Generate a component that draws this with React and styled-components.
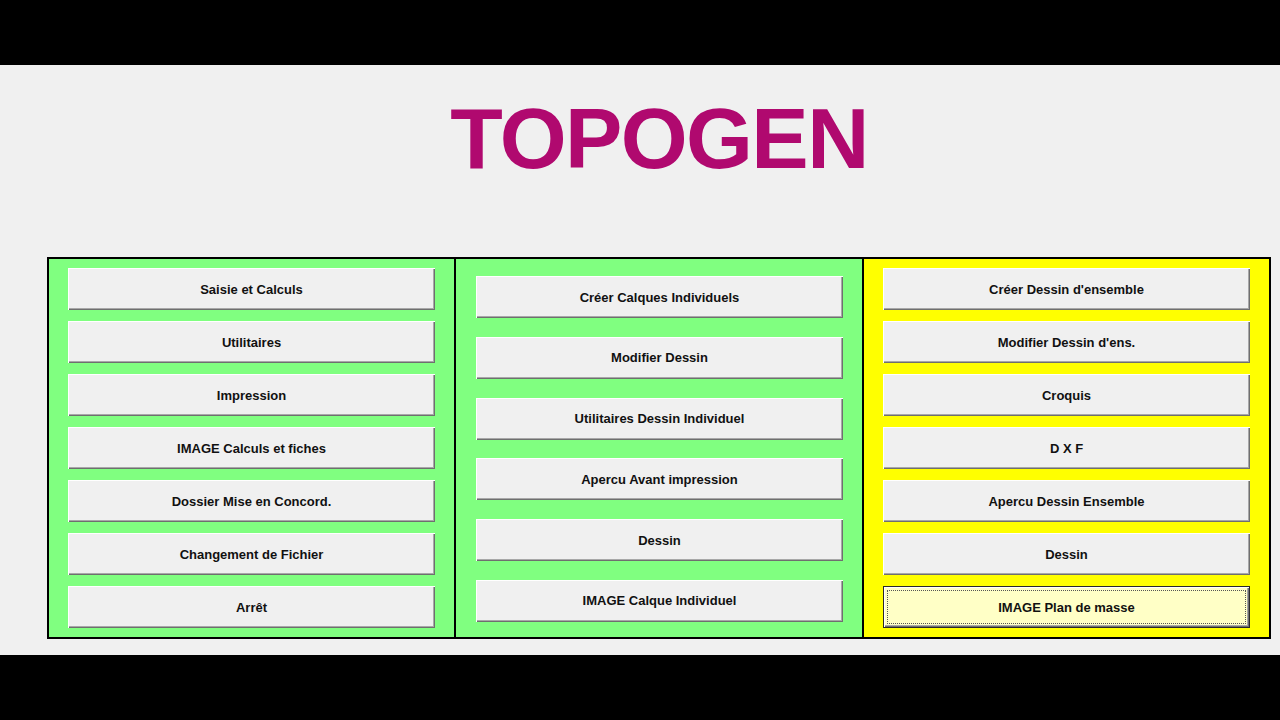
import React from "react";
import styled, { createGlobalStyle } from "styled-components";

const Global = createGlobalStyle`
  html, body { margin: 0; padding: 0; background: #000; }
  body { font-family: "Liberation Sans", Arial, sans-serif; }
  #root { width: 1280px; height: 720px; }
`;

const Screen = styled.div`
  width: 1280px;
  height: 720px;
  display: flex;
  flex-direction: column;
  background: #000;
`;

const Band = styled.div`
  height: 65px;
  flex: none;
  background: #000;
`;

const Window = styled.main`
  height: 590px;
  flex: none;
  background: #f0f0f0;
  padding: 30px 9px 0 47px;
  box-sizing: border-box;
  display: flex;
  flex-direction: column;
`;

const Title = styled.h1`
  margin: 0 0 76px;
  font-family: "Liberation Sans", Arial, sans-serif;
  font-weight: 700;
  font-size: 86px;
  line-height: 86px;
  letter-spacing: -1.6px;
  color: #b0096f;
  text-align: center;
`;

const Board = styled.div`
  display: grid;
  grid-template-columns: 405px 406px 405px;
  gap: 2px;
  border: 2px solid #000;
  background: #000;
  width: 1224px;
  height: 382px;
  box-sizing: border-box;
`;

const Column = styled.div`
  background: ${(p) => p.$bg};
  display: flex;
  flex-direction: column;
  padding: ${(p) => (p.$spread ? "17px 19px 0 20px" : "9px 19px 0 19px")};
  gap: ${(p) => (p.$spread ? "18.8px" : "11px")};
`;

const Button = styled.button`
  height: 42px;
  flex: none;
  width: 100%;
  box-sizing: border-box;
  font-family: "Liberation Sans", Arial, sans-serif;
  font-weight: 700;
  font-size: 13px;
  color: #111;
  background: ${(p) => (p.$focused ? "#ffffc6" : "#f0f0f0")};
  border: ${(p) => (p.$focused ? "1px solid #2a2a2a" : "none")};
  box-shadow: inset 1px 1px #ffffff, inset -1px -1px #6f6f6f,
    inset -2px -2px #a8a8a8;
  padding: 0;
  margin: 0;
  cursor: default;
  outline: ${(p) => (p.$focused ? "1px dotted #555" : "none")};
  outline-offset: -5px;
`;

const left = [
  "Saisie et Calculs",
  "Utilitaires",
  "Impression",
  "IMAGE Calculs et fiches",
  "Dossier Mise en Concord.",
  "Changement de Fichier",
  "Arrêt",
];

const middle = [
  "Créer Calques Individuels",
  "Modifier Dessin",
  "Utilitaires Dessin Individuel",
  "Apercu Avant impression",
  "Dessin",
  "IMAGE Calque Individuel",
];

const right = [
  "Créer Dessin d'ensemble",
  "Modifier Dessin d'ens.",
  "Croquis",
  "D X F",
  "Apercu Dessin Ensemble",
  "Dessin",
  "IMAGE Plan de masse",
];

export default function App() {
  return (
    <Screen>
      <Global />
      <Band />
      <Window>
        <Title>TOPOGEN</Title>
        <Board>
          <Column $bg="#80ff80">
            {left.map((t) => (
              <Button key={t}>{t}</Button>
            ))}
          </Column>
          <Column $bg="#80ff80" $spread>
            {middle.map((t) => (
              <Button key={t}>{t}</Button>
            ))}
          </Column>
          <Column $bg="#ffff00">
            {right.map((t, i) => (
              <Button key={t + i} $focused={i === right.length - 1}>
                {t}
              </Button>
            ))}
          </Column>
        </Board>
      </Window>
      <Band />
    </Screen>
  );
}
